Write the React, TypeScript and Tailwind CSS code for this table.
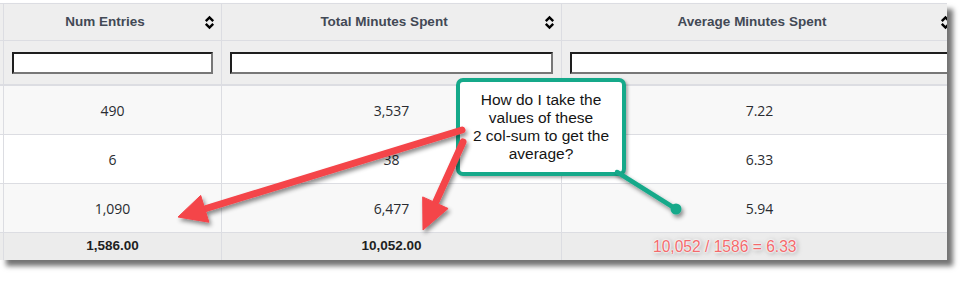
import React from 'react';

type Row = { entries: string; minutes: string; avg: string };

const rows: Row[] = [
  { entries: '490', minutes: '3,537', avg: '7.22' },
  { entries: '6', minutes: '38', avg: '6.33' },
  { entries: '1,090', minutes: '6,477', avg: '5.94' },
];

const SortIcon = () => (
  <svg width="11" height="15" viewBox="0 0 11 15" className="shrink-0">
    <path d="M1.8 6.2 L5.5 2.5 L9.2 6.2" fill="none" stroke="#000" strokeWidth="2.4" />
    <path d="M1.8 8.8 L5.5 12.5 L9.2 8.8" fill="none" stroke="#000" strokeWidth="2.4" />
  </svg>
);

const HeaderCell = ({ label, width }: { label: string; width: string }) => (
  <div className={`${width} flex items-center border-l border-[#dcdde2] pl-[2px] pr-[6px]`}>
    <span className="flex-1 text-center text-[13.5px] font-bold text-[#424955]">{label}</span>
    <SortIcon />
  </div>
);

const FilterCell = ({ width }: { width: string }) => (
  <div className={`${width} flex items-center border-l border-[#dcdde2] pl-[8px] pr-[8px]`}>
    <div className="h-[22px] w-full border-2 border-t-[#1e1e1e] border-l-[#1e1e1e] border-b-[#777] border-r-[#777] bg-white" />
  </div>
);

const cols = ['w-[218px]', 'w-[340px]', 'w-[396px]'];

const App: React.FC = () => {
  return (
    <div className="relative h-[281px] w-[967px] overflow-hidden bg-white font-['Liberation_Sans',Arial,sans-serif]">
      {/* screenshot of the grid */}
      <div className="mt-[3px] flex w-[947px] flex-col overflow-hidden border-t border-[#dcdde2] shadow-[6px_6px_5px_rgba(0,0,0,0.55)]">
        <div className="flex h-[37px] shrink-0 border-b border-[#dcdde2] bg-[#eeeeee]">
          <div className="w-[3px] shrink-0" />
          <HeaderCell label="Num Entries" width={`${cols[0]} shrink-0`} />
          <HeaderCell label="Total Minutes Spent" width={`${cols[1]} shrink-0`} />
          <HeaderCell label="Average Minutes Spent" width={`${cols[2]} shrink-0`} />
        </div>
        <div className="flex h-[45px] shrink-0 border-b-2 border-[#dcdde2] bg-[#eeeeee]">
          <div className="w-[3px] shrink-0" />
          <FilterCell width={`${cols[0]} shrink-0`} />
          <FilterCell width={`${cols[1]} shrink-0`} />
          <FilterCell width={`${cols[2]} shrink-0`} />
        </div>
        {rows.map((r, i) => (
          <div
            key={i}
            className={`flex h-[49px] shrink-0 border-b border-[#dcdde2] font-['Open_Sans',sans-serif] text-[14px] text-[#2a2c31] ${
              i % 2 === 0 ? 'bg-[#f8f8f8]' : 'bg-white'
            }`}
          >
            <div className="w-[3px] shrink-0" />
            <div className={`${cols[0]} flex shrink-0 items-center justify-center border-l border-[#dcdde2]`}>{r.entries}</div>
            <div className={`${cols[1]} flex shrink-0 items-center justify-center border-l border-[#dcdde2]`}>{r.minutes}</div>
            <div className={`${cols[2]} flex shrink-0 items-center justify-center border-l border-[#dcdde2]`}>{r.avg}</div>
          </div>
        ))}
        <div className="flex h-[27px] shrink-0 bg-[#ececec] text-[13.5px] font-bold text-[#1e1f22]">
          <div className="w-[3px] shrink-0" />
          <div className={`${cols[0]} flex shrink-0 items-center justify-center border-l border-[#dcdde2]`}>1,586.00</div>
          <div className={`${cols[1]} flex shrink-0 items-center justify-center border-l border-[#dcdde2]`}>10,052.00</div>
          <div className={`${cols[2]} shrink-0 border-l border-[#dcdde2]`} />
        </div>
      </div>

      {/* callout box */}
      <div className="absolute left-[456px] top-[78px] flex h-[98px] w-[170px] items-center justify-center rounded-[7px] border-4 border-[#15a98a] bg-white shadow-[2px_2px_3px_rgba(0,0,0,0.3)]">
        <p className="text-center text-[15.5px] leading-[18px] text-[#151515]">
          How do I take the
          <br />
          values of these
          <br />
          2 col-sum to get the
          <br />
          average?
        </p>
      </div>

      {/* arrows and leader line */}
      <svg className="pointer-events-none absolute left-0 top-0" width="967" height="281" viewBox="0 0 967 281">
        <defs>
          <filter id="sh" x="-20%" y="-20%" width="140%" height="140%">
            <feDropShadow dx="2" dy="3" stdDeviation="2" floodColor="#000" floodOpacity="0.45" />
          </filter>
        </defs>
        <g filter="url(#sh)">
          <line x1="617" y1="172" x2="676" y2="209" stroke="#15a98a" strokeWidth="4.5" strokeLinecap="round" />
          <circle cx="676" cy="209" r="5.5" fill="#15a98a" />
        </g>
        <g filter="url(#sh)" fill="#f4444a" stroke="#f4444a">
          <line x1="462" y1="130" x2="206" y2="208.5" strokeWidth="7" strokeLinecap="round" />
          <polygon points="178,217 200.7,195.4 208.9,222.2" strokeWidth="1" strokeLinejoin="round" />
          <line x1="463" y1="142" x2="436" y2="201.5" strokeWidth="7" strokeLinecap="round" />
          <polygon points="423,230 422.7,196.9 448.1,208.5" strokeWidth="1" strokeLinejoin="round" />
        </g>
      </svg>

      {/* formula note */}
      <div className="absolute left-[653px] top-[237px] text-[15.6px] leading-[20px] text-[#f26a6c] [text-shadow:0_0_1px_#fff,0_0_2px_#fff,0_0_3px_#fff,0_0_3px_#fff,1px_1px_5px_rgba(0,0,0,0.6)]">
        10,052 / 1586 = 6.33
      </div>
    </div>
  );
};

export default App;
